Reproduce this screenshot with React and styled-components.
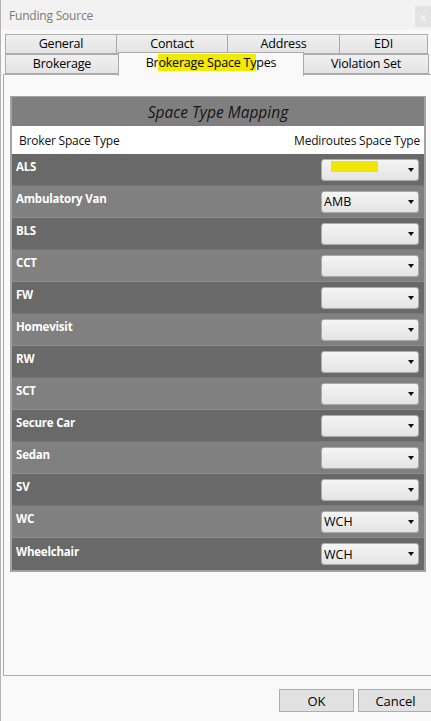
import React from "react";
import styled, { createGlobalStyle } from "styled-components";

const GlobalStyle = createGlobalStyle`
  html, body {
    margin: 0;
    padding: 0;
    background: #f0f0f0;
    overflow: hidden;
  }
  body {
    font-family: "Segoe UI", "Open Sans", "Noto Sans", sans-serif;
  }
`;

const topTabs = [
  { label: "General", width: 112 },
  { label: "Contact", width: 112 },
  { label: "Address", width: 113 },
  { label: "EDI", width: 89 }
];

const bottomTabs = [
  { label: "Brokerage", width: 114 },
  { label: "Brokerage Space Types", width: 186, active: true },
  { label: "Violation Set", width: 126 }
];

const mappings = [
  { broker: "ALS", value: "", marked: true },
  { broker: "Ambulatory Van", value: "AMB" },
  { broker: "BLS", value: "" },
  { broker: "CCT", value: "" },
  { broker: "FW", value: "" },
  { broker: "Homevisit", value: "" },
  { broker: "RW", value: "" },
  { broker: "SCT", value: "" },
  { broker: "Secure Car", value: "" },
  { broker: "Sedan", value: "" },
  { broker: "SV", value: "" },
  { broker: "WC", value: "WCH" },
  { broker: "Wheelchair", value: "WCH" }
];

const Window = styled.div`
  width: 431px;
  height: 721px;
  overflow: hidden;
  display: flex;
  flex-direction: column;
  background: #f9f9f9;
  border-left: 1px solid #b4b4b4;
  box-sizing: border-box;
`;

const TitleBar = styled.div`
  height: 30px;
  flex-shrink: 0;
  display: flex;
  align-items: center;
  justify-content: space-between;
  padding-left: 8px;
  background: #f2f2f2;
  font-size: 12px;
  letter-spacing: -0.2px;
  color: #7a7a7a;
`;

const CloseBox = styled.div`
  width: 16px;
  height: 21px;
  margin-top: 2px;
  background: #e3e3e3;
  color: #fbfbfb;
  font-size: 11px;
  display: flex;
  align-items: center;
  justify-content: center;
`;

const Body = styled.div`
  flex: 1;
  display: flex;
  flex-direction: column;
  padding: 4px 0 0 2px;
`;

const TabStrip = styled.div`
  display: flex;
  flex-direction: column;
  padding-left: 3px;
`;

const TabRow = styled.div`
  display: flex;
  align-items: flex-start;
  height: 20px;
`;

const Tab = styled.div`
  box-sizing: border-box;
  flex-shrink: 0;
  width: ${({ $width }) => $width}px;
  height: ${({ $active }) => ($active ? 24 : 20)}px;
  margin-top: ${({ $active }) => ($active ? -2 : 0)}px;
  margin-left: -1px;
  position: relative;
  z-index: ${({ $active }) => ($active ? 2 : 1)};
  border: 1px solid #acacac;
  border-bottom: ${({ $active }) => ($active ? "none" : "1px solid #acacac")};
  background: ${({ $active }) =>
    $active ? "#f9f9f9" : "linear-gradient(#f0f0f0, #e3e3e3)"};
  font-size: 12.5px;
  letter-spacing: -0.2px;
  line-height: ${({ $active }) => ($active ? 20 : 18)}px;
  color: #000;
  text-align: center;
  white-space: nowrap;
`;

const Mark = styled.span`
  background: #f2ea00;
`;

const TabPanel = styled.div`
  box-sizing: border-box;
  width: 437px;
  height: 602px;
  flex-shrink: 0;
  border: 1px solid #acacac;
  background: #f9f9f9;
  padding: 21px 13px 0 6px;
`;

const Grid = styled.div`
  border: 2px solid #a3a3a3;
  border-top-width: 1px;
  display: flex;
  flex-direction: column;
  background: #fff;
`;

const GridTitle = styled.div`
  height: 29px;
  background: #7f7f7f;
  display: flex;
  align-items: center;
  justify-content: center;
  font-size: 15.5px;
  font-style: italic;
  color: #161616;
`;

const ColumnHeader = styled.div`
  height: 28px;
  display: flex;
  align-items: center;
  justify-content: space-between;
  padding: 0 4px 0 7px;
  font-size: 12px;
  letter-spacing: -0.2px;
  color: #111;
  background: #fff;
`;

const Row = styled.div`
  box-sizing: border-box;
  height: 32px;
  display: flex;
  align-items: center;
  justify-content: space-between;
  padding: 0 5px 0 4px;
  background: ${({ $odd }) => ($odd ? "#808080" : "#696969")};
  border-bottom: 1px solid ${({ $odd }) => ($odd ? "#8c8c8c" : "#777777")};
  &:last-child {
    border-bottom: none;
  }
`;

const BrokerName = styled.span`
  color: #fff;
  font-weight: 700;
  font-size: 11.5px;
  letter-spacing: -0.2px;
  margin-top: -6px;
`;

const Combo = styled.div`
  box-sizing: border-box;
  width: 98px;
  height: 22px;
  border: 1px solid #acacac;
  border-radius: 3px;
  background: linear-gradient(#f5f5f5, #e3e3e3);
  display: flex;
  align-items: center;
  justify-content: space-between;
  padding: 0 4px 0 2px;
  font-size: 12.5px;
  color: #000;
`;

const ComboMark = styled.span`
  display: block;
  width: 47px;
  height: 11px;
  margin: -7px 0 0 7px;
  background: #f0e600;
`;

const Arrow = styled.span`
  width: 0;
  height: 0;
  border-left: 3.5px solid transparent;
  border-right: 3.5px solid transparent;
  border-top: 4px solid #111;
  margin-left: auto;
`;

const Footer = styled.div`
  display: flex;
  gap: 4px;
  padding: 13px 0 0 276px;
`;

const Button = styled.div`
  box-sizing: border-box;
  flex-shrink: 0;
  width: 75px;
  height: 23px;
  border: 1px solid #adadad;
  background: #e1e1e1;
  display: flex;
  align-items: center;
  justify-content: center;
  font-size: 13px;
  color: #000;
`;

const App = () => (
  <>
    <GlobalStyle />
    <Window>
      <TitleBar>
        Funding Source
        <CloseBox>x</CloseBox>
      </TitleBar>
      <Body>
        <TabStrip>
          <TabRow>
            {topTabs.map(t => (
              <Tab key={t.label} $width={t.width}>
                {t.label}
              </Tab>
            ))}
          </TabRow>
          <TabRow>
            {bottomTabs.map(t => (
              <Tab key={t.label} $width={t.width} $active={t.active}>
                {t.active ? (
                  <>
                    Br<Mark>okerage Space Ty</Mark>pes
                  </>
                ) : (
                  t.label
                )}
              </Tab>
            ))}
          </TabRow>
        </TabStrip>
        <TabPanel>
          <Grid>
            <GridTitle>Space Type Mapping</GridTitle>
            <ColumnHeader>
              <span>Broker Space Type</span>
              <span>Mediroutes Space Type</span>
            </ColumnHeader>
            {mappings.map((m, i) => (
              <Row key={m.broker} $odd={i % 2 === 1}>
                <BrokerName>{m.broker}</BrokerName>
                <Combo>
                  {m.marked ? <ComboMark /> : <span>{m.value}</span>}
                  <Arrow />
                </Combo>
              </Row>
            ))}
          </Grid>
        </TabPanel>
        <Footer>
          <Button>OK</Button>
          <Button>Cancel</Button>
        </Footer>
      </Body>
    </Window>
  </>
);

export default App;
